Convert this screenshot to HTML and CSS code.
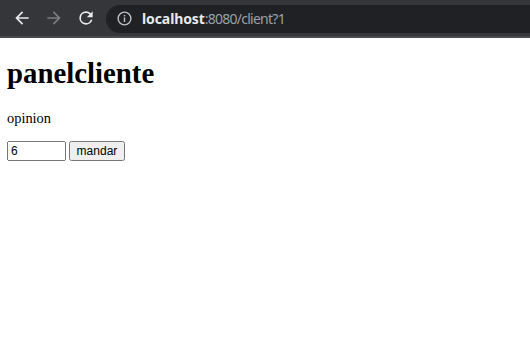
FILE: index.html
```html
<!DOCTYPE html>
<html lang="es">
<head>
    <meta charset="UTF-8">
    <title>panelcliente</title>
    <link rel="stylesheet" href="styles.css">
</head>
<body>
    <div class="toolbar">
        <div class="nav">
            <svg class="nav-icon" viewBox="0 0 24 24" width="20" height="20"><path d="M20 11H7.8l5.6-5.6L12 4l-8 8 8 8 1.4-1.4L7.8 13H20z" fill="#e8eaed"/></svg>
            <svg class="nav-icon" viewBox="0 0 24 24" width="20" height="20"><path d="M4 11h12.2l-5.6-5.6L12 4l8 8-8 8-1.4-1.4 5.6-5.6H4z" fill="#7d7e81"/></svg>
            <svg class="nav-icon" viewBox="0 0 24 24" width="20" height="20"><path d="M17.65 6.35A7.96 7.96 0 0 0 12 4a8 8 0 1 0 7.730 10h-2.08A6 6 0 1 1 12 6c1.66 0 3.14.69 4.22 1.78L13 11h7V4z" fill="#e8eaed"/></svg>
        </div>
        <div class="omnibox">
            <svg class="info" viewBox="0 0 24 24" width="17" height="17"><circle cx="12" cy="12" r="9" fill="none" stroke="#bdc1c6" stroke-width="2"/><rect x="11" y="10.5" width="2" height="6.5" fill="#bdc1c6"/><rect x="11" y="7" width="2" height="2" fill="#bdc1c6"/></svg>
            <span class="url"><span class="host">localhost</span><span class="path">:8080/client?1</span></span>
        </div>
    </div>

    <div class="page">
        <h1>panelcliente</h1>
        <p>opinion</p>
        <form>
            <input type="text" class="opinion-input" value="6">
            <button type="button">mandar</button>
        </form>
    </div>
</body>
</html>
```

FILE: styles.css
```css
body {
    margin: 0;
    font-family: "Liberation Serif", "Times New Roman", serif;
    background: white;
}

.toolbar {
    display: flex;
    align-items: center;
    height: 36px;
    background: #35363a;
    border-bottom: 2px solid #4a4b4f;
    box-sizing: content-box;
}

.nav {
    display: flex;
    align-items: center;
    gap: 12px;
    padding-left: 12px;
    padding-right: 10px;
}

.nav-icon {
    display: block;
}

.omnibox {
    flex: 1;
    display: flex;
    align-items: center;
    height: 28px;
    margin-top: 1px;
    background: #202124;
    border-radius: 14px 0 0 14px;
    padding-left: 10px;
}

.info {
    display: block;
    margin-right: 9px;
}

.url {
    font-family: "Noto Sans", "Open Sans", sans-serif;
    font-size: 14px;
    color: #9aa0a6;
    letter-spacing: -0.1px;
}

.host {
    color: #e8eaed;
    font-weight: bold;
}

.path {
    letter-spacing: -0.75px;
}

/* page content is shown at 90% zoom */
.page {
    padding: 0 7px;
    font-size: 14.4px;
}

h1 {
    font-size: 2em;
    margin: 0.67em 0;
}

.opinion-input {
    width: 51px;
    padding: 1px 2px;
    font-family: "Liberation Sans", Arial, sans-serif;
    font-size: 12px;
}

button {
    margin-left: -1px;
    padding: 1px 6px;
    font-family: "Liberation Sans", Arial, sans-serif;
    font-size: 12px;
}
```
